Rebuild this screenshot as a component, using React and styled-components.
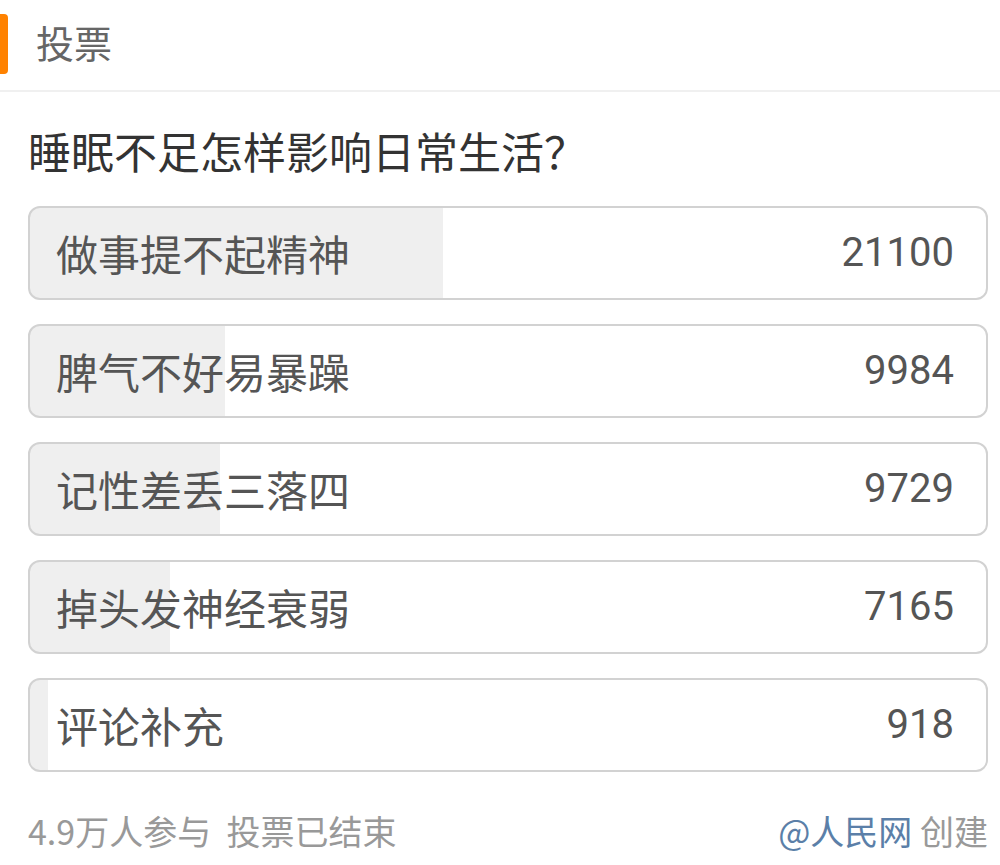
import React from "react";
import styled, { createGlobalStyle } from "styled-components";

const Global = createGlobalStyle`
  html, body { margin: 0; padding: 0; background: #fff; }
  body { font-family: "Noto Sans", "Noto Sans CJK SC", sans-serif; }
`;

const Page = styled.div`
  width: 1000px;
  height: 865px;
  background: #fff;
  overflow: hidden;
`;

const Header = styled.div`
  height: 90px;
  display: flex;
  align-items: center;
  border-bottom: 2px solid #f0f0f0;
`;

const Accent = styled.div`
  width: 8px;
  height: 60px;
  background: #ff8200;
  border-radius: 0 4px 4px 0;
  margin-top: -2px;
`;

const HeaderTitle = styled.div`
  margin-left: 28px;
  font-size: 38px;
  color: #666;
  line-height: 1;
  margin-top: -4px;
`;

const Body = styled.div`
  padding: 0 12px 0 28px;
`;

const Question = styled.div`
  font-size: 43px;
  line-height: 1;
  color: #333;
  padding: 37px 0 0 0;
  height: 77px;
  font-family: "Noto Sans CJK SC", sans-serif;
`;

const Options = styled.div`
  display: flex;
  flex-direction: column;
  gap: 24px;
`;

const Option = styled.div`
  height: 94px;
  box-sizing: border-box;
  border: 2px solid #d2d2d2;
  border-radius: 12px;
  display: flex;
  align-items: center;
  justify-content: space-between;
  padding: 0 32px 0 26px;
  color: #555;
  background: linear-gradient(
    to right,
    #efefef 0,
    #efefef ${(p) => p.$pct}%,
    #fff ${(p) => p.$pct}%,
    #fff 100%
  );
`;

const Label = styled.span`
  font-size: 42px;
  font-family: "Noto Sans CJK SC", sans-serif;
  line-height: 1;
`;

const Count = styled.span`
  font-size: 40px;
  font-family: "Roboto", "Noto Sans", sans-serif;
  line-height: 1;
`;

const Footer = styled.div`
  display: flex;
  justify-content: space-between;
  align-items: center;
  margin-top: 42px;
  font-size: 34px;
  line-height: 1;
  color: #999;
  font-family: "Noto Sans CJK SC", sans-serif;
`;

const Stats = styled.span`
  white-space: pre;
`;

const Creator = styled.span`
  color: #999;
`;

const Handle = styled.span`
  color: #5b7fa8;
`;

const data = [
  { label: "做事提不起精神", votes: 21100 },
  { label: "脾气不好易暴躁", votes: 9984 },
  { label: "记性差丢三落四", votes: 9729 },
  { label: "掉头发神经衰弱", votes: 7165 },
  { label: "评论补充", votes: 918 },
];

export default function App() {
  const total = data.reduce((s, d) => s + d.votes, 0);
  return (
    <Page>
      <Global />
      <Header>
        <Accent />
        <HeaderTitle>投票</HeaderTitle>
      </Header>
      <Body>
        <Question>睡眠不足怎样影响日常生活？</Question>
        <Options>
          {data.map((d) => (
            <Option key={d.label} $pct={((d.votes / total) * 100).toFixed(2)}>
              <Label>{d.label}</Label>
              <Count>{d.votes}</Count>
            </Option>
          ))}
        </Options>
        <Footer>
          <Stats>{"4.9万人参与  投票已结束"}</Stats>
          <Creator>
            <Handle>@人民网</Handle> 创建
          </Creator>
        </Footer>
      </Body>
    </Page>
  );
}
